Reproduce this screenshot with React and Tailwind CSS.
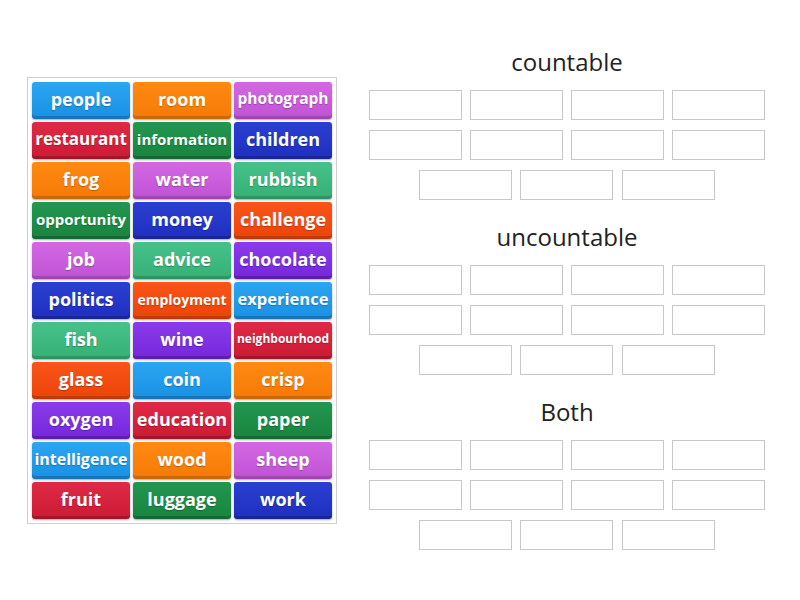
import React from 'react';

const tones = {
  blue: 'bg-gradient-to-b from-[#2ba6f2] to-[#1990e3] shadow-[inset_0_-3px_0_rgba(0,0,0,0.18),0_1px_2px_rgba(0,0,0,0.35)]',
  orange: 'bg-gradient-to-b from-[#ff8a12] to-[#f57a05] shadow-[inset_0_-3px_0_rgba(0,0,0,0.16),0_1px_2px_rgba(0,0,0,0.35)]',
  pink: 'bg-gradient-to-b from-[#d368e3] to-[#c052d4] shadow-[inset_0_-3px_0_rgba(0,0,0,0.16),0_1px_2px_rgba(0,0,0,0.35)]',
  red: 'bg-gradient-to-b from-[#e02a45] to-[#cc1a34] shadow-[inset_0_-3px_0_rgba(0,0,0,0.2),0_1px_2px_rgba(0,0,0,0.35)]',
  green: 'bg-gradient-to-b from-[#22974f] to-[#19843f] shadow-[inset_0_-3px_0_rgba(0,0,0,0.2),0_1px_2px_rgba(0,0,0,0.35)]',
  navy: 'bg-gradient-to-b from-[#2a3fd1] to-[#1f2fbf] shadow-[inset_0_-3px_0_rgba(0,0,0,0.2),0_1px_2px_rgba(0,0,0,0.35)]',
  teal: 'bg-gradient-to-b from-[#46c18a] to-[#35b176] shadow-[inset_0_-3px_0_rgba(0,0,0,0.16),0_1px_2px_rgba(0,0,0,0.35)]',
  violet: 'bg-gradient-to-b from-[#8a3bea] to-[#7526dc] shadow-[inset_0_-3px_0_rgba(0,0,0,0.2),0_1px_2px_rgba(0,0,0,0.35)]',
  flame: 'bg-gradient-to-b from-[#fa5418] to-[#ec4407] shadow-[inset_0_-3px_0_rgba(0,0,0,0.18),0_1px_2px_rgba(0,0,0,0.35)]',
};

const words = [
  ['people', 'blue', 'text-[18px]'],
  ['room', 'orange', 'text-[18px]'],
  ['photograph', 'pink', 'text-[15.5px]'],
  ['restaurant', 'red', 'text-[17px]'],
  ['information', 'green', 'text-[15px]'],
  ['children', 'navy', 'text-[18px]'],
  ['frog', 'orange', 'text-[18px]'],
  ['water', 'pink', 'text-[18px]'],
  ['rubbish', 'teal', 'text-[18px]'],
  ['opportunity', 'green', 'text-[15px]'],
  ['money', 'navy', 'text-[18px]'],
  ['challenge', 'flame', 'text-[18px]'],
  ['job', 'pink', 'text-[18px]'],
  ['advice', 'teal', 'text-[18px]'],
  ['chocolate', 'violet', 'text-[18px]'],
  ['politics', 'navy', 'text-[18px]'],
  ['employment', 'flame', 'text-[14px]'],
  ['experience', 'blue', 'text-[16.5px]'],
  ['fish', 'teal', 'text-[18px]'],
  ['wine', 'violet', 'text-[18px]'],
  ['neighbourhood', 'red', 'text-[12px]'],
  ['glass', 'flame', 'text-[18px]'],
  ['coin', 'blue', 'text-[18px]'],
  ['crisp', 'orange', 'text-[18px]'],
  ['oxygen', 'violet', 'text-[18px]'],
  ['education', 'red', 'text-[18px]'],
  ['paper', 'green', 'text-[18px]'],
  ['intelligence', 'blue', 'text-[16px]'],
  ['wood', 'orange', 'text-[18px]'],
  ['sheep', 'pink', 'text-[18px]'],
  ['fruit', 'red', 'text-[18px]'],
  ['luggage', 'green', 'text-[18px]'],
  ['work', 'navy', 'text-[18px]'],
];

const groups = ['countable', 'uncountable', 'Both'];

const Slot = () => <div className="h-[30px] w-[93px] border border-[#c8c8c8] bg-white" />;

const Group = ({ title }) => (
  <section className="flex flex-col items-center">
    <h2 className="h-[32px] text-[24px] leading-[32px] text-[#222]">{title}</h2>
    <div className="mt-[12px] flex flex-col items-center gap-[10px]">
      <div className="flex gap-[8.33px]"><Slot /><Slot /><Slot /><Slot /></div>
      <div className="flex gap-[8.33px]"><Slot /><Slot /><Slot /><Slot /></div>
      <div className="flex gap-[8.33px]"><Slot /><Slot /><Slot /></div>
    </div>
  </section>
);

export default function App() {
  return (
    <div className="flex h-[600px] w-[800px] bg-white font-['Open_Sans',sans-serif]">
      <div className="ml-[27px] mt-[77px] self-start border border-[#cfcfcf] p-[4px]">
        <div className="grid grid-cols-[98px_98px_98px] gap-[3px]">
          {words.map(([word, tone, size]) => (
            <div
              key={word}
              className={`flex h-[37px] items-center justify-center rounded-[3px] pb-[3px] font-bold text-white [text-shadow:0_1px_1px_rgba(0,0,0,0.25)] ${tones[tone]} ${size}`}
            >
              {word}
            </div>
          ))}
        </div>
      </div>
      <div className="ml-[31.5px] mt-[46px] flex w-[397px] flex-col gap-[21px] self-start">
        {groups.map(g => <Group key={g} title={g} />)}
      </div>
    </div>
  );
}
